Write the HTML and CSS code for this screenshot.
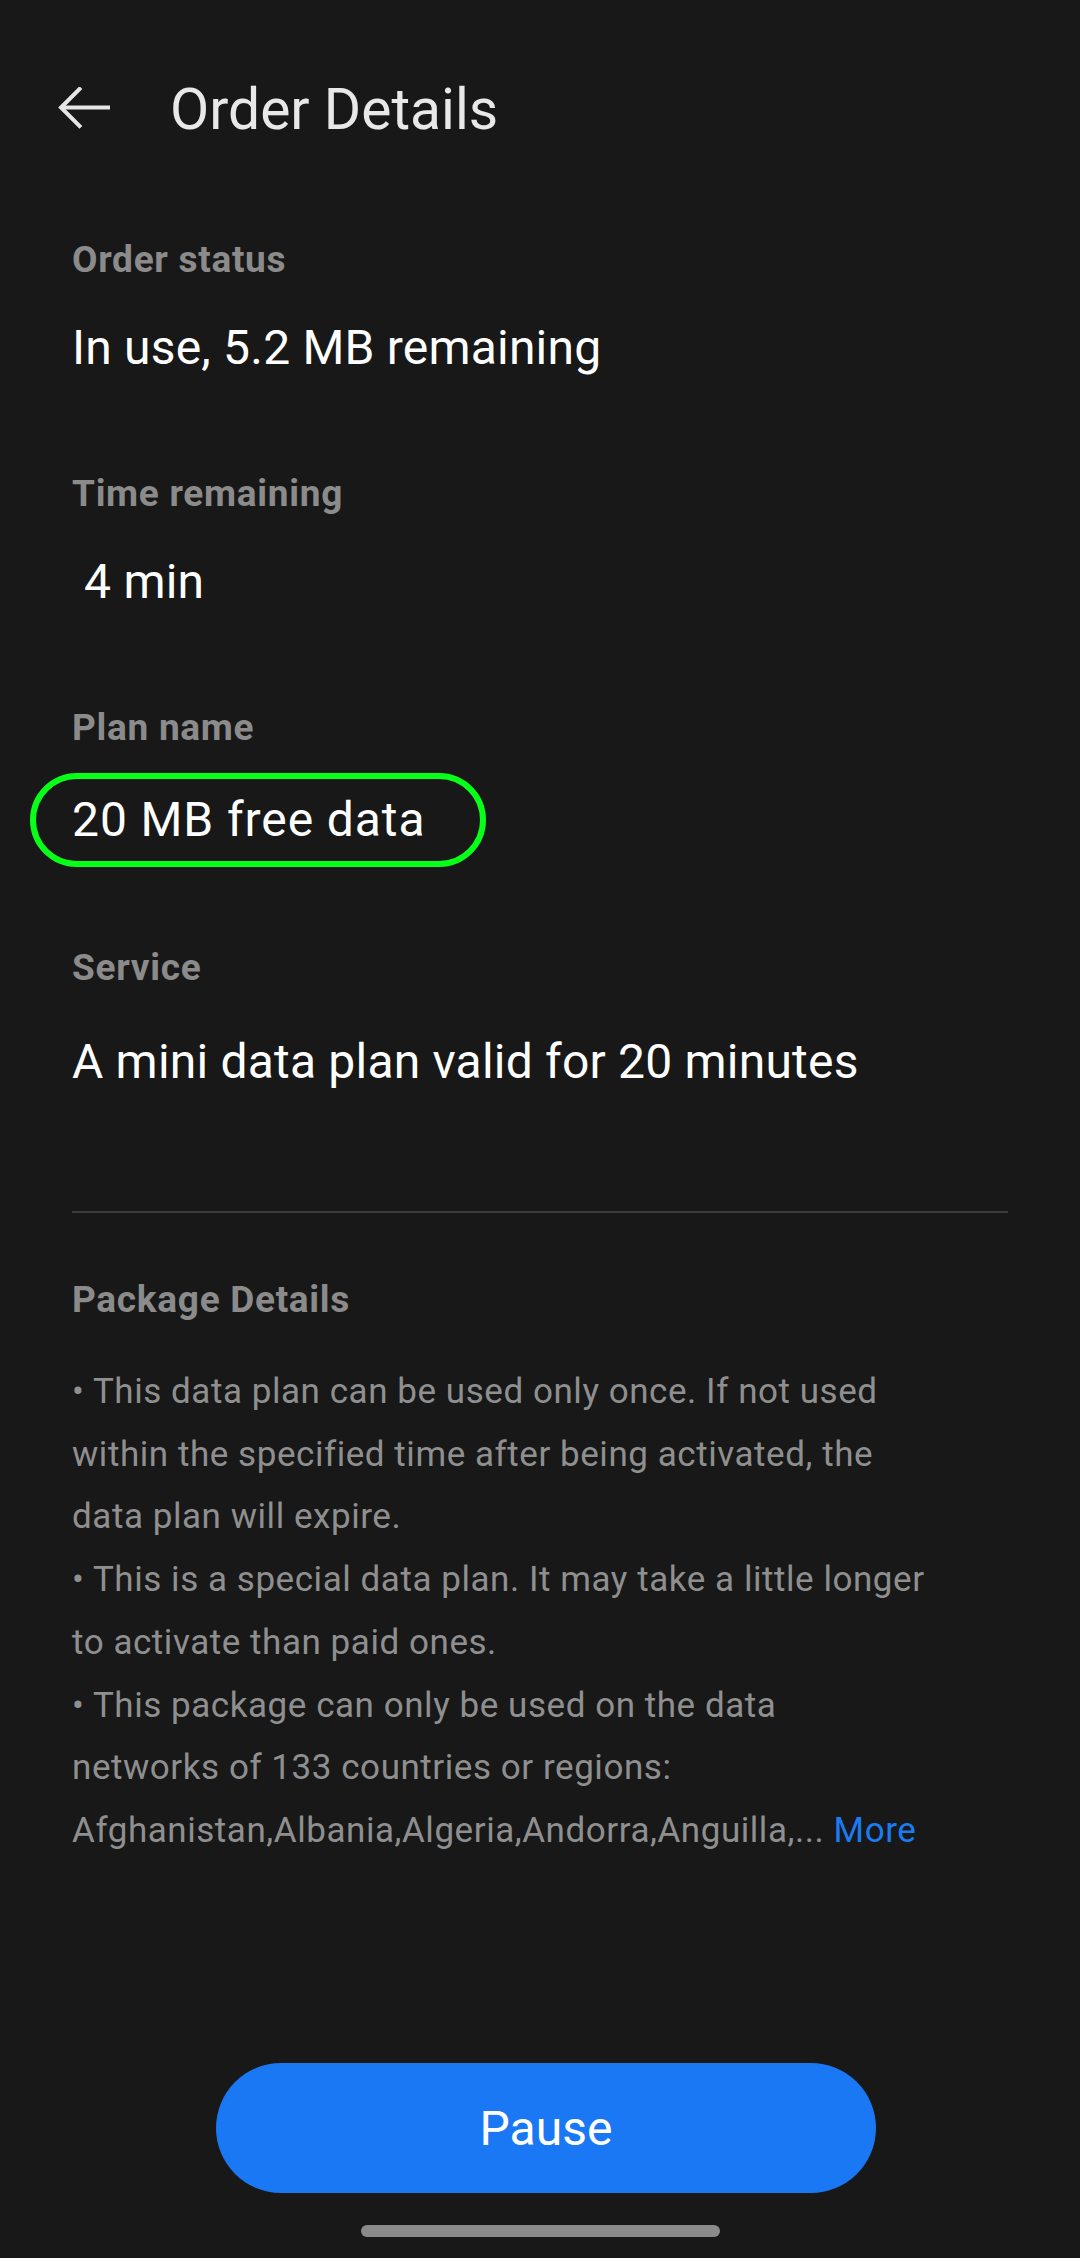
FILE: index.html
```html
<!DOCTYPE html>
<html lang="en">
<head>
<meta charset="utf-8">
<title>Order Details</title>
<link rel="stylesheet" href="styles.css">
</head>
<body>
<div class="page">
  <header class="header">
    <svg class="back" width="54" height="42" viewBox="0 0 54 42" aria-hidden="true">
      <path d="M52 20.5H4" fill="none" stroke="#e6e6e6" stroke-width="4"/>
      <path d="M21.5 2 3 20.5 21.5 39" fill="none" stroke="#e6e6e6" stroke-width="4" stroke-linecap="square"/>
    </svg>
    <h1 class="title">Order Details</h1>
  </header>

  <main class="content">
    <section class="field field--first">
      <div class="label">Order status</div>
      <div class="value">In use, 5.2 MB remaining</div>
    </section>
    <section class="field">
      <div class="label">Time remaining</div>
      <div class="value">&nbsp;4 min</div>
    </section>
    <section class="field">
      <div class="label">Plan name</div>
      <div class="value value--m value--marked">20 MB free data<span class="mark"></span></div>
    </section>
    <section class="field field--late">
      <div class="label">Service</div>
      <div class="value value--l">A mini data plan valid for 20 minutes</div>
    </section>

    <hr class="divider">

    <section class="package">
      <div class="label">Package Details</div>
      <div class="details">
        <p>• This data plan can be used only once. If not used<br>within the specified time after being activated, the<br>data plan will expire.</p>
        <p>• This is a special data plan. It may take a little longer<br>to activate than paid ones.</p>
        <p>• This package can only be used on the data<br>networks of 133 countries or regions:<br>Afghanistan,Albania,Algeria,Andorra,Anguilla,... <span class="more">More</span></p>
      </div>
    </section>
  </main>

  <footer class="footer">
    <button class="pause" type="button">Pause</button>
    <div class="home-bar"></div>
  </footer>
</div>
</body>
</html>
```

FILE: styles.css
```css
html, body {
  margin: 0;
  padding: 0;
  background: #181818;
}

body {
  font-family: Roboto, "Noto Sans", "Liberation Sans", sans-serif;
  color: #ffffff;
}

.page {
  min-height: 100vh;
  display: flex;
  flex-direction: column;
}

.header {
  display: flex;
  align-items: flex-start;
  padding: 70px 0 0 58px;
  height: 80px;
}

.back {
  display: block;
  margin-top: 17px;
  flex: none;
}

.title {
  margin: 0 0 0 58px;
  font-size: 57px;
  line-height: 80px;
  font-weight: 400;
  color: #e8e8e8;
}

.content {
  flex: 1;
  padding: 0 72px;
}

.field {
  margin-top: 90px;
}

.field--first {
  margin-top: 86px;
}

.field--late {
  margin-top: 92px;
}

.label {
  font-size: 37px;
  line-height: 48px;
  font-weight: 700;
  letter-spacing: 0.7px;
  color: #8b8b8b;
}

.value {
  margin-top: 32px;
  font-size: 48px;
  line-height: 64px;
  letter-spacing: 0.2px;
  color: #ffffff;
  white-space: nowrap;
}

.value--m {
  margin-top: 36px;
  letter-spacing: 0.9px;
}

.value--l {
  margin-top: 38px;
}

.value--marked {
  position: relative;
}

.mark {
  position: absolute;
  left: -42px;
  top: -15px;
  width: 456px;
  height: 94px;
  box-sizing: border-box;
  border: 6px solid #08ff18;
  border-radius: 47px;
  pointer-events: none;
}

.divider {
  margin: 117px 0 0;
  border: 0;
  height: 2px;
  background: #3b3b3b;
}

.package {
  margin-top: 63px;
}

.details {
  margin-top: 37px;
  font-size: 35px;
  line-height: 62.7px;
  letter-spacing: 0.55px;
  color: #8f8f8f;
  white-space: nowrap;
}

.details p {
  margin: 0;
}

.more {
  color: #1b7bf3;
}

.footer {
  display: flex;
  flex-direction: column;
  align-items: center;
}

.pause {
  width: 660px;
  height: 130px;
  border: 0;
  border-radius: 65px;
  background: #1a78f4;
  color: #ffffff;
  font-family: Roboto, "Noto Sans", sans-serif;
  font-size: 48px;
  font-weight: 400;
  margin: 0 0 32px 12px;
  padding: 0;
}

.home-bar {
  width: 359px;
  height: 12px;
  border-radius: 6px;
  background: #8a8a8a;
  margin: 0 0 21px;
}
```
